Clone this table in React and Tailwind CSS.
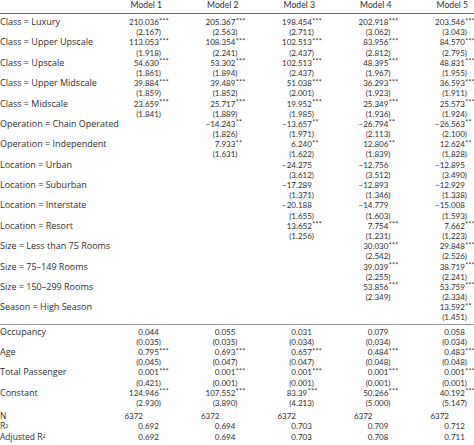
const MODELS = ['Model 1', 'Model 2', 'Model 3', 'Model 4', 'Model 5']

// each entry: [label, [coef, stars, se] per model or null]
const MAIN = [
  ['Class = Luxury', [['210.036', '***', '(2.167)'], ['205.367', '***', '(2.563)'], ['198.454', '***', '(2.711)'], ['202.918', '***', '(3.062)'], ['203.546', '***', '(3.043)']]],
  ['Class = Upper Upscale', [['113.053', '***', '(1.918)'], ['108.354', '***', '(2.241)'], ['102.513', '***', '(2.437)'], ['83.956', '***', '(2.812)'], ['84.570', '***', '(2.795)']]],
  ['Class = Upscale', [['54.630', '***', '(1.861)'], ['53.302', '***', '(1.894)'], ['102.513', '***', '(2.437)'], ['48.395', '***', '(1.967)'], ['48.831', '***', '(1.955)']]],
  ['Class = Upper Midscale', [['39.884', '***', '(1.859)'], ['39.489', '***', '(1.852)'], ['51.038', '***', '(2.001)'], ['36.293', '***', '(1.923)'], ['36.593', '***', '(1.911)']]],
  ['Class = Midscale', [['23.659', '***', '(1.841)'], ['25.717', '***', '(1.889)'], ['19.952', '***', '(1.985)'], ['25.349', '***', '(1.936)'], ['25.573', '***', '(1.924)']]],
  ['Operation = Chain Operated', [null, ['−14.243', '**', '(1.826)'], ['−13.657', '**', '(1.971)'], ['−26.794', '**', '(2.113)'], ['−26.563', '**', '(2.100)']]],
  ['Operation = Independent', [null, ['7.933', '**', '(1.631)'], ['6.240', '**', '(1.622)'], ['12.806', '**', '(1.839)'], ['12.624', '**', '(1.828)']]],
  ['Location = Urban', [null, null, ['−24.275', '', '(3.612)'], ['−12.756', '', '(3.512)'], ['−12.895', '', '(3.490)']]],
  ['Location = Suburban', [null, null, ['−17.289', '', '(1.371)'], ['−12.893', '', '(1.346)'], ['−12.929', '', '(1.338)']]],
  ['Location = Interstate', [null, null, ['−20.188', '', '(1.655)'], ['−14.779', '', '(1.603)'], ['−15.008', '', '(1.593)']]],
  ['Location = Resort', [null, null, ['13.652', '***', '(1.256)'], ['7.754', '***', '(1.231)'], ['7.662', '***', '(1.223)']]],
  ['Size = Less than 75 Rooms', [null, null, null, ['30.030', '***', '(2.542)'], ['29.848', '***', '(2.526)']]],
  ['Size = 75–149 Rooms', [null, null, null, ['39.039', '***', '(2.255)'], ['38.719', '***', '(2.241)']]],
  ['Size = 150–299 Rooms', [null, null, null, ['53.856', '***', '(2.349)'], ['53.759', '***', '(2.334)']]],
  ['Season = High Season', [null, null, null, null, ['13.592', '**', '(1.451)']]],
]

const CONTROLS = [
  ['Occupancy', [['0.044', '', '(0.035)'], ['0.055', '', '(0.035)'], ['0.031', '', '(0.034)'], ['0.079', '', '(0.034)'], ['0.058', '', '(0.034)']]],
  ['Age', [['0.795', '***', '(0.045)'], ['0.693', '***', '(0.047)'], ['0.657', '***', '(0.047)'], ['0.484', '***', '(0.048)'], ['0.483', '***', '(0.048)']]],
  ['Total Passenger', [['0.001', '***', '(0.421)'], ['0.001', '***', '(0.001)'], ['0.001', '***', '(0.001)'], ['0.001', '***', '(0.001)'], ['0.001', '***', '(0.001)']]],
  ['Constant', [['124.946', '***', '(2.930)'], ['107.552', '***', '(3.890)'], ['83.39', '***', '(4.213)'], ['50.266', '***', '(5.000)'], ['40.192', '***', '(5.147)']]],
]

const FIT = [
  ['N', ['6372', '6372', '6372', '6372', '6372']],
  ['R2', ['0.692', '0.694', '0.703', '0.709', '0.712']],
  ['Adjusted R2', ['0.692', '0.694', '0.703', '0.708', '0.711']],
]

const COLS = 'grid grid-cols-[108px_repeat(5,76.5px)] whitespace-nowrap'
const GRID = `${COLS} h-[10.2px] leading-[10.2px]`

// Decimal-aligned number: integer part right-aligned up to the point
function Num({ value, stars = '' }) {
  const dot = value.indexOf('.')
  const head = dot === -1 ? value : value.slice(0, dot)
  const tail = dot === -1 ? '' : value.slice(dot)
  return (
    <div className="flex">
      <span className="w-[35px] text-right">{head}</span>
      <span>
        {tail}
        {stars && <span className="text-[7px] align-top relative top-[-1.5px] tracking-[0.3px] ml-[0.5px]">{stars}</span>}
      </span>
    </div>
  )
}

function Label({ text, size = 'text-[9px]' }) {
  const font = { fontFamily: '"Open Sans", Lato, sans-serif' }
  if (text.endsWith('R2')) {
    return (
      <div className={size} style={font}>
        {text.slice(0, -1)}
        <span className="text-[5.5px] align-top relative top-[-0.5px]">2</span>
      </div>
    )
  }
  return <div className={size} style={font}>{text}</div>
}

function Block({ rows }) {
  return rows.map(([label, cells]) => (
    <div key={label}>
      <div className={GRID}>
        <Label text={label} />
        {cells.map((c, i) => (c ? <Num key={i} value={c[0]} stars={c[1]} /> : <div key={i} />))}
      </div>
      <div className={GRID}>
        <div />
        {cells.map((c, i) => (c ? <Num key={i} value={c[2]} /> : <div key={i} />))}
      </div>
    </div>
  ))
}

export default function App() {
  return (
    <div
      className="w-[474px] h-[445px] overflow-hidden bg-white text-[#2e2e2e] text-[8px]"
      style={{ fontFamily: 'Lato, "Open Sans", sans-serif' }}
    >
      <div className="w-[493px]">
        {/* Header */}
        <div className={`${COLS} h-[14px] leading-[10px] text-[8.6px] border-b border-[#6f6f6f]`}>
          <div />
          {MODELS.map(m => (
            <div key={m} className="text-center">{m}</div>
          ))}
        </div>

        {/* Main effects */}
        <div className="pt-[3px] pb-[1px]">
          <Block rows={MAIN} />
        </div>

        {/* Controls */}
        <div className="border-t border-[#9a9a9a] pt-[2px]">
          <Block rows={CONTROLS} />
        </div>

        {/* Fit statistics */}
        <div className="mt-[2.5px]">
          {FIT.map(([label, vals]) => (
            <div key={label} className={`${COLS} h-[10.5px] leading-[10.5px]`}>
              <Label text={label} size="text-[8.5px]" />
              {vals.map((v, i) => (
                <Num key={i} value={v} />
              ))}
            </div>
          ))}
        </div>
      </div>
    </div>
  )
}
